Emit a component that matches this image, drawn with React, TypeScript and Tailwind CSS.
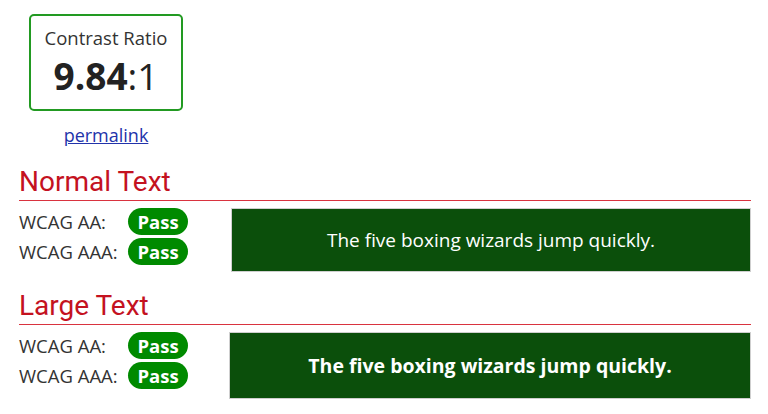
import React from 'react';

const sans = { fontFamily: '"Open Sans", "Liberation Sans", sans-serif' };

const Pass = () => (
  <span className="inline-flex h-[27px] w-[60px] items-center justify-center rounded-full bg-[#008a00] text-[18.5px] font-bold text-white">
    Pass
  </span>
);

const Section = ({ title, large }: { title: string; large?: boolean }) => (
  <section>
    <h2 className="border-b border-[#d9333f] pb-[2px] text-[28px] leading-[32px] text-[#c4121f] [font-family:Roboto,sans-serif]">
      {title}
    </h2>
    <div className="flex items-start pt-[7px]">
      <div className="flex w-[210px] shrink-0 flex-col gap-[3px] text-[18.5px] text-[#333]">
        <div className="flex h-[27px] items-center">
          <span className="w-[109px]">WCAG AA:</span>
          <Pass />
        </div>
        <div className="flex h-[27px] items-center">
          <span className="w-[109px]">WCAG AAA:</span>
          <Pass />
        </div>
      </div>
      <div
        className={`flex flex-1 items-center justify-center border border-[#cfcfcf] bg-[#0b4f0b] text-white ${
          large ? 'h-[67px] text-[19.5px] font-bold' : 'ml-[2px] h-[64px] text-[19px]'
        }`}
      >
        The five boxing wizards jump quickly.
      </div>
    </div>
  </section>
);

export default function App() {
  return (
    <div className="h-[414px] w-[768px] bg-white pl-[19px] pr-[17px] pt-[14px]" style={sans}>
      <div className="flex w-[174px] flex-col items-center">
        <div className="flex h-[97px] w-[154px] flex-col items-center rounded-[5px] border-2 border-[#229a22] pt-[9px]">
          <div className="text-[18.5px] leading-[26px] text-[#333]">Contrast Ratio</div>
          <div className="mt-[2px] text-[37px] leading-[46px] text-[#222]">
            <span className="font-bold">9.84</span>:1
          </div>
        </div>
        <a href="#" className="mt-[12px] text-[18px] leading-[24px] text-[#2233aa] underline">
          permalink
        </a>
      </div>
      <div className="mt-[19px]">
        <Section title="Normal Text" />
      </div>
      <div className="mt-[18px]">
        <Section title="Large Text" large />
      </div>
    </div>
  );
}
